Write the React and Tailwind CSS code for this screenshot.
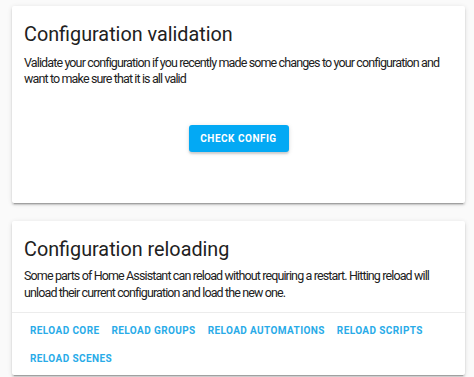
import React from 'react'

const shadow = 'shadow-[0_2px_2px_0_rgba(0,0,0,0.14),0_1px_5px_0_rgba(0,0,0,0.12),0_3px_1px_-2px_rgba(0,0,0,0.2)]'

function Card({ title, children }) {
  return (
    <div className={`w-[453px] ml-3 bg-white rounded-[2px] ${shadow}`}>
      <div className="px-3 pt-[15px]">
        <h2 className="text-[19.8px] leading-[28px] text-[#212121] font-normal">{title}</h2>
      </div>
      {children}
    </div>
  )
}

const reloads = ['Reload core', 'Reload groups', 'Reload automations', 'Reload scripts', 'Reload scenes']

export default function App() {
  return (
    <div className="min-h-[377px] bg-[#fafafa] pt-[6px] pb-1 font-['Roboto',_'Liberation_Sans',_sans-serif]">
      <Card title="Configuration validation">
        <p className="px-3 mt-[6px] text-[12.5px] leading-[16px] tracking-[-0.87px] text-[#212121]">
          Validate your configuration if you recently made some changes to your configuration and want to make sure
          that it is all valid
        </p>
        <div className="flex justify-center pt-[38px] pb-[51px]">
          <button className="h-[27px] w-[100px] rounded-[3px] bg-[#03a9f4] text-white text-[10px] font-bold tracking-[0.5px] uppercase shadow-[0_2px_2px_0_rgba(0,0,0,0.14),0_1px_5px_0_rgba(0,0,0,0.12)]">
            Check config
          </button>
        </div>
      </Card>

      <div className="h-[18px]" />

      <Card title="Configuration reloading">
        <p className="px-3 mt-[3px] pb-[11px] text-[12.5px] leading-[17px] tracking-[-0.87px] text-[#212121]">
          Some parts of Home Assistant can reload without requiring a restart. Hitting reload will unload their current
          configuration and load the new one.
        </p>
        <div className="border-t border-[#ececec] px-[12px] pt-[3px] pb-[3px] flex flex-wrap">
          {reloads.map((r) => (
            <button
              key={r}
              className="h-[28px] px-[6px] text-[10px] font-bold tracking-[0.4px] uppercase text-[#29abe8]"
            >
              {r}
            </button>
          ))}
        </div>
      </Card>
    </div>
  )
}
